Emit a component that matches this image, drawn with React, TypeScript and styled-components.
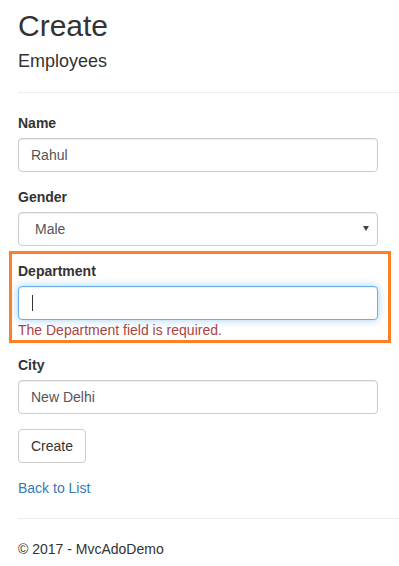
import React from 'react'
import styled, { createGlobalStyle } from 'styled-components'

const GlobalStyle = createGlobalStyle`
  html, body {
    margin: 0;
    padding: 0;
    background: #fff;
  }
  body {
    font-family: "Liberation Sans", Arial, Helvetica, sans-serif;
    font-size: 14px;
    line-height: 20px;
    color: #333;
  }
  * {
    box-sizing: border-box;
  }
`

const Page = styled.div`
  padding: 9px 0 0 18px;
  overflow: hidden;
`

const Title = styled.h2`
  margin: 0 0 10px;
  font-size: 30px;
  font-weight: 500;
  line-height: 33px;
`

const Subtitle = styled.h4`
  margin: 0 0 10px;
  font-size: 18px;
  font-weight: 500;
  line-height: 19.8px;
`

const Rule = styled.hr`
  margin: 20px 0;
  border: 0;
  border-top: 1px solid #eee;
  height: 0;
`

const Form = styled.form`
  display: flex;
  flex-direction: column;
  gap: 15px;
`

const Group = styled.div`
  position: relative;
  display: flex;
  flex-direction: column;
  width: 360px;
`

const Label = styled.label`
  font-weight: bold;
  margin-bottom: 5px;
  line-height: 20px;
`

const Input = styled.input<{ $focused?: boolean }>`
  display: block;
  width: 360px;
  height: 34px;
  padding: 6px 12px;
  font-family: inherit;
  font-size: 14px;
  line-height: 20px;
  color: #555;
  background: #fff;
  border: 1px solid ${(p) => (p.$focused ? '#66afe9' : '#ccc')};
  border-radius: 4px;
  box-shadow: ${(p) =>
    p.$focused
      ? 'inset 0 1px 1px rgba(0,0,0,.075), 0 0 8px rgba(102,175,233,.6)'
      : 'inset 0 1px 1px rgba(0,0,0,.075)'};
  outline: none;
`

const SelectWrap = styled.div`
  position: relative;
  width: 360px;
`

const Select = styled.select`
  display: block;
  width: 360px;
  height: 34px;
  padding: 6px 12px 6px 16px;
  font-family: inherit;
  font-size: 14px;
  line-height: 20px;
  color: #555;
  background: #fff;
  border: 1px solid #ccc;
  border-radius: 4px;
  box-shadow: inset 0 1px 1px rgba(0,0,0,.075);
  appearance: none;
  -webkit-appearance: none;
  outline: none;
`

const Arrow = styled.svg`
  position: absolute;
  right: 9px;
  top: 14px;
  pointer-events: none;
`

const FieldWrap = styled.div`
  position: relative;
`

const Caret = styled.span`
  position: absolute;
  left: 14px;
  top: 9px;
  width: 1px;
  height: 16px;
  background: #333;
`

const ErrorText = styled.span`
  color: #a94442;
  line-height: 20px;
`

// orange annotation frame drawn over the Department field
const Highlight = styled.div`
  position: absolute;
  left: -9px;
  top: -10px;
  width: 382px;
  height: 92px;
  border: 3px solid #ff7f27;
  pointer-events: none;
`

const Button = styled.button`
  align-self: flex-start;
  height: 34px;
  padding: 6px 12px;
  font-family: inherit;
  font-size: 14px;
  line-height: 20px;
  color: #333;
  background: #fff;
  border: 1px solid #ccc;
  border-radius: 4px;
`

const LinkRow = styled.div`
  margin-top: 15px;
`

const BackLink = styled.a`
  color: #337ab7;
  text-decoration: none;
  line-height: 20px;
`

const Footer = styled.footer`
  p {
    margin: 0;
    line-height: 20px;
  }
`

export default function App() {
  return (
    <>
      <GlobalStyle />
      <Page>
        <Title>Create</Title>
        <Subtitle>Employees</Subtitle>
        <Rule />
        <Form onSubmit={(e) => e.preventDefault()}>
          <Group>
            <Label>Name</Label>
            <Input defaultValue="Rahul" />
          </Group>
          <Group>
            <Label>Gender</Label>
            <SelectWrap>
              <Select defaultValue="Male">
                <option>Male</option>
                <option>Female</option>
              </Select>
              <Arrow width="6" height="5" viewBox="0 0 6 5">
                <path d="M0 0 H6 L3 5 Z" fill="#444" />
              </Arrow>
            </SelectWrap>
          </Group>
          <Group>
            <Label>Department</Label>
            <FieldWrap>
              <Input $focused defaultValue="" />
              <Caret />
            </FieldWrap>
            <ErrorText>The Department field is required.</ErrorText>
            <Highlight />
          </Group>
          <Group>
            <Label>City</Label>
            <Input defaultValue="New Delhi" />
          </Group>
          <Button type="submit">Create</Button>
        </Form>
        <LinkRow>
          <BackLink href="#">Back to List</BackLink>
        </LinkRow>
        <Rule />
        <Footer>
          <p>© 2017 - MvcAdoDemo</p>
        </Footer>
      </Page>
    </>
  )
}
